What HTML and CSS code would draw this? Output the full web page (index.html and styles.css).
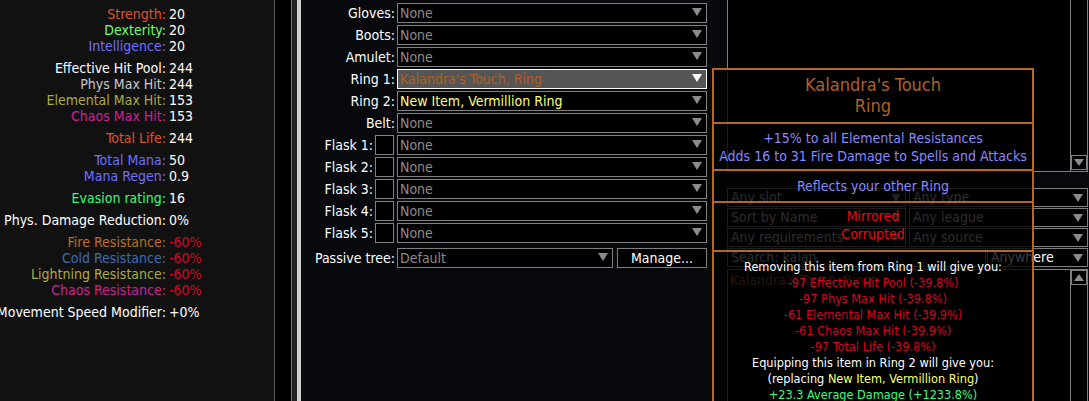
FILE: index.html
```html
<!DOCTYPE html>
<html lang="en">
<head>
    <meta charset="UTF-8">
    <title>Items</title>
    <link rel="stylesheet" href="styles.css">
</head>
<body>
<div class="page">

    <div class="stats">
        <div class="group">
            <div class="stat"><span class="label c-str">Strength:</span><span class="val">20</span></div>
            <div class="stat"><span class="label c-dex">Dexterity:</span><span class="val">20</span></div>
            <div class="stat"><span class="label c-int">Intelligence:</span><span class="val">20</span></div>
        </div>
        <div class="group">
            <div class="stat"><span class="label">Effective Hit Pool:</span><span class="val">244</span></div>
            <div class="stat"><span class="label c-phys">Phys Max Hit:</span><span class="val">244</span></div>
            <div class="stat"><span class="label c-light">Elemental Max Hit:</span><span class="val">153</span></div>
            <div class="stat"><span class="label c-chaos">Chaos Max Hit:</span><span class="val">153</span></div>
        </div>
        <div class="group">
            <div class="stat"><span class="label c-life">Total Life:</span><span class="val">244</span></div>
        </div>
        <div class="group">
            <div class="stat"><span class="label c-int">Total Mana:</span><span class="val">50</span></div>
            <div class="stat"><span class="label c-int">Mana Regen:</span><span class="val">0.9</span></div>
        </div>
        <div class="group">
            <div class="stat"><span class="label c-eva">Evasion rating:</span><span class="val">16</span></div>
        </div>
        <div class="group">
            <div class="stat"><span class="label">Phys. Damage Reduction:</span><span class="val">0%</span></div>
        </div>
        <div class="group">
            <div class="stat"><span class="label c-fire">Fire Resistance:</span><span class="val neg">-60%</span></div>
            <div class="stat"><span class="label c-cold">Cold Resistance:</span><span class="val neg">-60%</span></div>
            <div class="stat"><span class="label c-light">Lightning Resistance:</span><span class="val neg">-60%</span></div>
            <div class="stat"><span class="label c-chaos">Chaos Resistance:</span><span class="val neg">-60%</span></div>
        </div>
        <div class="group">
            <div class="stat"><span class="label">Movement Speed Modifier:</span><span class="val">+0%</span></div>
        </div>
    </div>

    <div class="gutter"></div>
    <div class="track"></div>
    <div class="thumb"></div>

    <div class="gear">
        <div class="slot"><span class="slot-label">Gloves:</span><div class="dd">None</div></div>
        <div class="slot"><span class="slot-label">Boots:</span><div class="dd">None</div></div>
        <div class="slot"><span class="slot-label">Amulet:</span><div class="dd">None</div></div>
        <div class="slot"><span class="slot-label">Ring 1:</span><div class="dd dd-hover c-unique">Kalandra's Touch, Ring</div></div>
        <div class="slot"><span class="slot-label">Ring 2:</span><div class="dd c-rare">New Item, Vermillion Ring</div></div>
        <div class="slot"><span class="slot-label">Belt:</span><div class="dd">None</div></div>
        <div class="slot"><span class="slot-label">Flask 1:<span class="flask-box"></span></span><div class="dd">None</div></div>
        <div class="slot"><span class="slot-label">Flask 2:<span class="flask-box"></span></span><div class="dd">None</div></div>
        <div class="slot"><span class="slot-label">Flask 3:<span class="flask-box"></span></span><div class="dd">None</div></div>
        <div class="slot"><span class="slot-label">Flask 4:<span class="flask-box"></span></span><div class="dd">None</div></div>
        <div class="slot"><span class="slot-label">Flask 5:<span class="flask-box"></span></span><div class="dd">None</div></div>
        <div class="slot tree-row">
            <span class="slot-label">Passive tree:</span>
            <div class="dd tree-dd">Default</div>
            <div class="btn">Manage...</div>
        </div>
    </div>

    <div class="items">
        <div class="textbox">
            <div class="tb-area"></div>
            <div class="sbar sbar-end"><div class="sb-btn down"></div></div>
        </div>
        <div class="filters">
            <div class="frow">
                <div class="fdd">Any slot</div>
                <div class="fdd">Any type</div>
            </div>
            <div class="frow">
                <div class="fdd">Sort by Name</div>
                <div class="fdd">Any league</div>
            </div>
            <div class="frow">
                <div class="fdd">Any requirements</div>
                <div class="fdd">Any source</div>
            </div>
            <div class="frow search-row">
                <div class="search">Search: kalan</div>
                <div class="fdd">Anywhere</div>
            </div>
        </div>
        <div class="list">
            <div class="list-body"><div class="list-item c-unique">Kalandra's Touch, Ring</div></div>
            <div class="sbar"><div class="sb-btn up"></div></div>
        </div>
    </div>

    <div class="tooltip">
        <div class="tip-sec tip-title">Kalandra's Touch<br>Ring</div>
        <div class="tip-sec tip-mods">+15% to all Elemental Resistances<br>Adds 16 to 31 Fire Damage to Spells and Attacks</div>
        <div class="tip-sec tip-mods tip-one">Reflects your other Ring</div>
        <div class="tip-sec tip-flags">Mirrored<br>Corrupted</div>
        <div class="tip-sec tip-compare">
            <div>Removing this item from Ring 1 will give you:</div>
            <div class="neg">-97 Effective Hit Pool (-39.8%)</div>
            <div class="neg">-97 Phys Max Hit (-39.8%)</div>
            <div class="neg">-61 Elemental Max Hit (-39.9%)</div>
            <div class="neg">-61 Chaos Max Hit (-39.9%)</div>
            <div class="neg">-97 Total Life (-39.8%)</div>
            <div>Equipping this item in Ring 2 will give you:</div>
            <div>(replacing <span class="c-rare">New Item, Vermillion Ring</span>)</div>
            <div class="pos">+23.3 Average Damage (+1233.8%)</div>
        </div>
    </div>

</div>
</body>
</html>
```

FILE: styles.css
```css
body {
    margin: 0;
    background: #000;
    color: #fff;
    font-family: "DejaVu Sans Condensed", "DejaVu Sans", sans-serif;
    font-stretch: condensed;
    font-size: 14px;
    overflow: hidden;
}
.page {
    position: relative;
    display: flex;
    width: 1089px;
    height: 401px;
    overflow: hidden;
}

/* stats column */
.stats {
    flex: none;
    width: 275px;
    box-sizing: border-box;
    padding-top: 6px;
    background: #111;
    border-right: 1px solid #5c5c5c;
    line-height: 16px;
}
.group + .group {
    margin-top: 6px;
}
.stat {
    display: grid;
    grid-template-columns: 166px auto;
    column-gap: 3px;
    white-space: nowrap;
}
.label {
    display: flex;
    justify-content: flex-end;
}
.neg { color: #dd0022; }
.pos { color: #33ff77; }
.c-str, .c-life { color: #e05030; }
.c-dex { color: #70ff70; }
.c-int { color: #7070ff; }
.c-phys { color: #c8c8c8; }
.c-light { color: #adaa47; }
.c-chaos { color: #d02090; }
.c-eva { color: #33ff77; }
.c-fire { color: #b97123; }
.c-cold { color: #3f6db3; }
.c-unique { color: #af6025; }
.c-rare { color: #ffff77; }

.gutter {
    flex: none;
    width: 16px;
    background: #000;
    border-right: 1px solid #777;
}
.track {
    flex: none;
    width: 5px;
    background: #222;
}
.thumb {
    flex: none;
    width: 4px;
    background: #d0d0d0;
}

/* gear slots */
.gear {
    flex: none;
    width: 426px;
    padding-top: 3px;
    background: #07090c;
}
.slot {
    display: flex;
    height: 20px;
    margin-bottom: 2px;
}
.slot-label {
    flex: none;
    width: 94px;
    display: flex;
    justify-content: flex-end;
    align-items: center;
    white-space: nowrap;
}
.flask-box {
    flex: none;
    width: 17px;
    height: 18px;
    margin: 0 1px 0 2px;
    border: 1px solid #808080;
    background: #000;
}
.dd {
    position: relative;
    flex: none;
    width: 310px;
    margin-left: 2px;
    box-sizing: border-box;
    border: 1px solid #808080;
    background: #000;
    color: #8c8c8c;
    padding-left: 2px;
    line-height: 18px;
    white-space: nowrap;
}
.dd::after,
.fdd::after {
    content: "";
    position: absolute;
    right: 4px;
    top: 4px;
    border-left: 5px solid transparent;
    border-right: 5px solid transparent;
    border-top: 8px solid #8c8c8c;
}
.dd.c-unique { color: #af6025; }
.dd.c-rare { color: #ffff77; }
.dd-hover {
    background: #555;
    border-color: #fff;
}
.dd-hover::after {
    border-top-color: #fff;
}
.tree-row {
    margin-top: 5px;
}
.tree-dd {
    width: 216px;
}
.btn {
    flex: none;
    width: 90px;
    margin-left: 4px;
    box-sizing: border-box;
    border: 1px solid #808080;
    background: #000;
    text-align: center;
    line-height: 18px;
}

/* item list side */
.items {
    flex: 1;
    background: #07090c;
}
.textbox {
    display: flex;
    height: 172px;
    margin-right: 1px;
    box-sizing: border-box;
    border: 1px solid #808080;
    border-top: 0;
    background: #000;
}
.tb-area {
    flex: 1;
}
.sbar {
    display: flex;
    flex-direction: column;
    width: 16px;
    border-left: 1px solid #808080;
}
.sbar-end {
    justify-content: flex-end;
    padding-bottom: 1px;
}
.sb-btn {
    position: relative;
    height: 15px;
    box-sizing: border-box;
    border: 1px solid #808080;
}
.sb-btn::after {
    content: "";
    position: absolute;
    left: 2px;
    top: 3px;
    border-left: 5px solid transparent;
    border-right: 5px solid transparent;
}
.sb-btn.down::after {
    border-top: 7px solid #8c8c8c;
}
.sb-btn.up::after {
    border-bottom: 7px solid #8c8c8c;
}
.filters {
    display: flex;
    flex-direction: column;
    gap: 1px;
    margin: 16px 1px 0 0;
}
.frow {
    display: flex;
    gap: 3px;
    height: 19px;
}
.fdd {
    position: relative;
    flex: 1;
    box-sizing: border-box;
    border: 1px solid #808080;
    background: #000;
    color: #c8c8c8;
    padding-left: 3px;
    line-height: 17px;
    white-space: nowrap;
}
.fdd::after {
    top: 5px;
}
.search-row {
    gap: 1px;
}
.search-row .fdd {
    color: #fff;
}
.search {
    flex: none;
    width: 259px;
    box-sizing: border-box;
    border: 1px solid #808080;
    background: #000;
    color: #c8c8c8;
    padding-left: 3px;
    line-height: 17px;
}
.list {
    display: flex;
    height: 200px;
    margin: 2px 1px 0 0;
    border: 1px solid #808080;
    background: #000;
}
.list-body {
    flex: 1;
    padding: 2px 0 0 2px;
}

/* hover tooltip */
.tooltip {
    position: absolute;
    left: 712px;
    top: 68px;
    width: 322px;
    height: 340px;
    box-sizing: border-box;
    border: 2px solid #b5662b;
    border-bottom: 0;
    background: rgba(0, 0, 0, 0.78);
    text-align: center;
    font-size: 14px;
    white-space: nowrap;
}
.tip-sec + .tip-sec {
    border-top: 2px solid #b5662b;
}
.tip-title {
    padding: 4px 0 6px;
    font-size: 18px;
    line-height: 21px;
    color: #af6025;
}
.tip-mods {
    padding: 5px 0 4px;
    line-height: 18px;
    color: #8888ff;
}
.tip-one {
    padding: 6px 0;
}
.tip-flags {
    padding: 4px 0 7px;
    line-height: 18px;
    color: #ee0a10;
}
.tip-compare {
    padding-top: 7px;
    font-size: 12.6px;
    line-height: 16px;
}
```
